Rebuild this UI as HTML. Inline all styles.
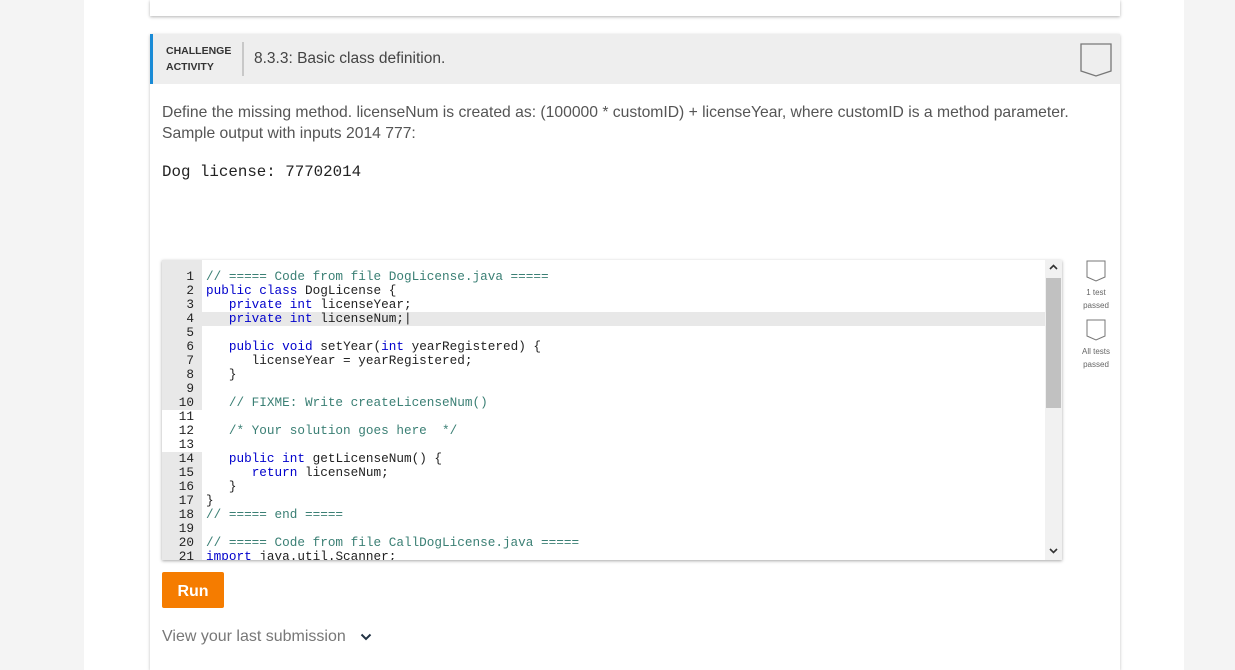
<!DOCTYPE html>
<html><head><style>
html,body{margin:0;width:1235px;height:670px;overflow:hidden}
body{background:#f4f4f4;font-family:"Liberation Sans",sans-serif;position:relative}
.col{position:absolute;left:84px;top:0;width:1100px;height:670px;background:#fff}
.top{position:absolute;left:150px;top:0;width:970px;height:16px;background:#fff;box-shadow:0 1px 3px rgba(0,0,0,.3)}
.card{position:absolute;left:150px;top:34px;width:970px;height:636px;background:#fff;box-shadow:0 1px 3px rgba(0,0,0,.25)}
.hdr{position:absolute;left:0;top:0;width:970px;height:50px;background:#eee;border-left:3px solid #1a8bd6;box-sizing:border-box}
.lab{position:absolute;left:13px;top:9px;font-size:10.5px;font-weight:bold;color:#333;line-height:16px}
.sep{position:absolute;left:89px;top:8px;width:2px;height:34px;background:#c8c8c8}
.ttl{position:absolute;left:101px;top:16px;font-size:15.5px;color:#444}
.p{position:absolute;left:12px;top:68px;font-size:15.7px;line-height:21px;color:#555;width:950px}
.out{position:absolute;left:12px;top:129px;font-family:"Liberation Mono",monospace;font-size:15.8px;color:#222}
.ed{position:absolute;left:12px;top:226px;width:900px;height:300px;background:#fff;box-shadow:0 1px 3px rgba(0,0,0,.35);overflow:hidden}
.gut{position:absolute;left:0;top:0;width:40px;height:300px;background:#e8e8e8}
.code{position:absolute;left:0;top:10px;font-family:"Liberation Mono",monospace;font-size:12.7px;line-height:14px;white-space:pre;color:#222}
.ln{display:block;height:14px}
.n{display:inline-block;width:32px;text-align:right;margin-right:12px}
.k{color:#00c}.c{color:#3a7f74}
.sb{position:absolute;left:883px;top:0;width:17px;height:300px;background:#f1f1f1}
.th{position:absolute;left:1px;top:18px;width:15px;height:130px;background:#c1c1c1}
.run{position:absolute;left:12px;top:538px;width:62px;height:36px;background:#f57c00;border-radius:2px;color:#fff;font-weight:bold;font-size:16px;text-align:center;line-height:40px}
.view{position:absolute;left:12px;top:594px;font-size:16px;color:#777}
.side{position:absolute;left:918px;font-size:8px;color:#666;text-align:center;width:56px;line-height:13px}
</style></head><body>
<div class="col"></div>
<div class="top"></div>
<div class="card">
<div class="hdr"><div class="lab">CHALLENGE<br>ACTIVITY</div><div class="sep"></div><div class="ttl">8.3.3: Basic class definition.</div>
<svg style="position:absolute;left:927px;top:9px" width="34" height="34"><path d="M1 1H31V28L16 33L1 28Z" fill="none" stroke="#777" stroke-width="1.3"/></svg></div>
<div class="p">Define the missing method. licenseNum is created as: (100000 * customID) + licenseYear, where customID is a method parameter.<br>Sample output with inputs 2014 777:</div>
<div class="out">Dog license: 77702014</div>
<div class="ed">
<div class="gut"></div>
<div style="position:absolute;left:0;top:150px;width:40px;height:42px;background:#fff"></div>
<div style="position:absolute;left:0;top:52px;width:883px;height:14px;background:#e8e8e8"></div>
<div class="code"><span class="ln"><span class="n">1</span><span class="c">// ===== Code from file DogLicense.java =====</span></span><span class="ln"><span class="n">2</span><span class="k">public class</span> DogLicense {</span><span class="ln"><span class="n">3</span>   <span class="k">private int</span> licenseYear;</span><span class="ln"><span class="n">4</span>   <span class="k">private int</span> licenseNum;|</span><span class="ln"><span class="n">5</span></span><span class="ln"><span class="n">6</span>   <span class="k">public void</span> setYear(<span class="k">int</span> yearRegistered) {</span><span class="ln"><span class="n">7</span>      licenseYear = yearRegistered;</span><span class="ln"><span class="n">8</span>   }</span><span class="ln"><span class="n">9</span></span><span class="ln"><span class="n">10</span>   <span class="c">// FIXME: Write createLicenseNum()</span></span><span class="ln"><span class="n">11</span></span><span class="ln"><span class="n">12</span>   <span class="c">/* Your solution goes here  */</span></span><span class="ln"><span class="n">13</span></span><span class="ln"><span class="n">14</span>   <span class="k">public int</span> getLicenseNum() {</span><span class="ln"><span class="n">15</span>      <span class="k">return</span> licenseNum;</span><span class="ln"><span class="n">16</span>   }</span><span class="ln"><span class="n">17</span>}</span><span class="ln"><span class="n">18</span><span class="c">// ===== end =====</span></span><span class="ln"><span class="n">19</span></span><span class="ln"><span class="n">20</span><span class="c">// ===== Code from file CallDogLicense.java =====</span></span><span class="ln"><span class="n">21</span><span class="k">import</span> java.util.Scanner;</span></div>
<div class="sb"><div class="th"></div>
<svg style="position:absolute;left:4px;top:4px" width="9" height="6"><path d="M1 5L4.5 1.5L8 5" fill="none" stroke="#333" stroke-width="1.6"/></svg>
<svg style="position:absolute;left:4px;top:288px" width="9" height="6"><path d="M1 1L4.5 4.5L8 1" fill="none" stroke="#333" stroke-width="1.6"/></svg></div>
</div>
<div class="side" style="top:226px"><svg width="20" height="22"><path d="M1 1H19V17L10 21L1 17Z" fill="none" stroke="#777" stroke-width="1"/></svg><br>1 test<br>passed</div>
<div class="side" style="top:285px"><svg width="20" height="22"><path d="M1 1H19V17L10 21L1 17Z" fill="none" stroke="#777" stroke-width="1"/></svg><br>All tests<br>passed</div>
<div class="run">Run</div>
<div class="view">View your last submission <svg style="margin-left:10px;vertical-align:middle" width="12" height="8"><path d="M1.5 1.5L6 6L10.5 1.5" fill="none" stroke="#234" stroke-width="2"/></svg></div>
</div>
</body></html>
